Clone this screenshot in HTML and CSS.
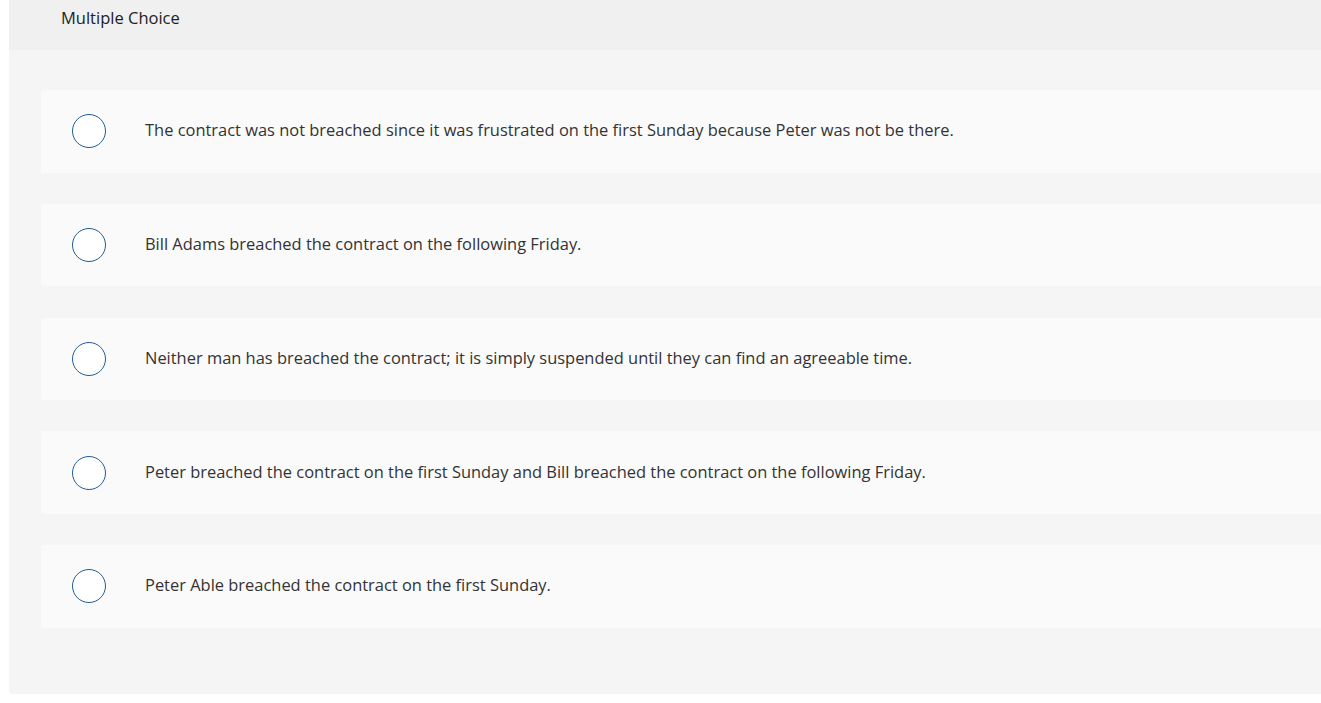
FILE: index.html
```html
<!DOCTYPE html>
<html lang="en">
<head>
<meta charset="utf-8">
<title>Multiple Choice</title>
<link rel="stylesheet" href="styles.css">
</head>
<body>
<div class="question">
  <div class="q-header">Multiple Choice</div>
  <div class="q-body">
    <div class="choices">
      <label class="choice"><span class="radio"></span><span class="choice-text">The contract was not breached since it was frustrated on the first Sunday because Peter was not be there.</span></label>
      <label class="choice"><span class="radio"></span><span class="choice-text">Bill Adams breached the contract on the following Friday.</span></label>
      <label class="choice"><span class="radio"></span><span class="choice-text">Neither man has breached the contract; it is simply suspended until they can find an agreeable time.</span></label>
      <label class="choice"><span class="radio"></span><span class="choice-text">Peter breached the contract on the first Sunday and Bill breached the contract on the following Friday.</span></label>
      <label class="choice"><span class="radio"></span><span class="choice-text">Peter Able breached the contract on the first Sunday.</span></label>
    </div>
  </div>
</div>
</body>
</html>
```
FILE: styles.css
```css
html, body {
  margin: 0;
  padding: 0;
  overflow: hidden;
  background: #ffffff;
}
body {
  padding-left: 9px;
  font-family: "Open Sans", "Liberation Sans", sans-serif;
  color: #333333;
}
.question {
  width: 1340px;
  border-radius: 0 0 4px 4px;
  overflow: hidden;
}
.q-header {
  height: 50px;
  box-sizing: border-box;
  background: #f0f0f0;
  padding: 8px 0 0 52px;
  font-size: 16.5px;
  line-height: 20px;
  color: #222;
}
.q-body {
  background: #f5f5f5;
  padding: 40px 0 66.5px 32px;
}
.choices {
  display: flex;
  flex-direction: column;
  gap: 31.25px;
}
.choice {
  display: flex;
  align-items: center;
  height: 82.5px;
  background: #fafafa;
  border-radius: 3px;
  padding-left: 31px;
  cursor: pointer;
}
.radio {
  flex: none;
  width: 32px;
  height: 32px;
  border: 1.7px solid #1f5d96;
  border-radius: 50%;
  background: #ffffff;
  margin-right: 39px;
}
.choice-text {
  font-size: 16.45px;
  line-height: 20px;
  color: #333333;
  position: relative;
  top: -1px;
}
```
